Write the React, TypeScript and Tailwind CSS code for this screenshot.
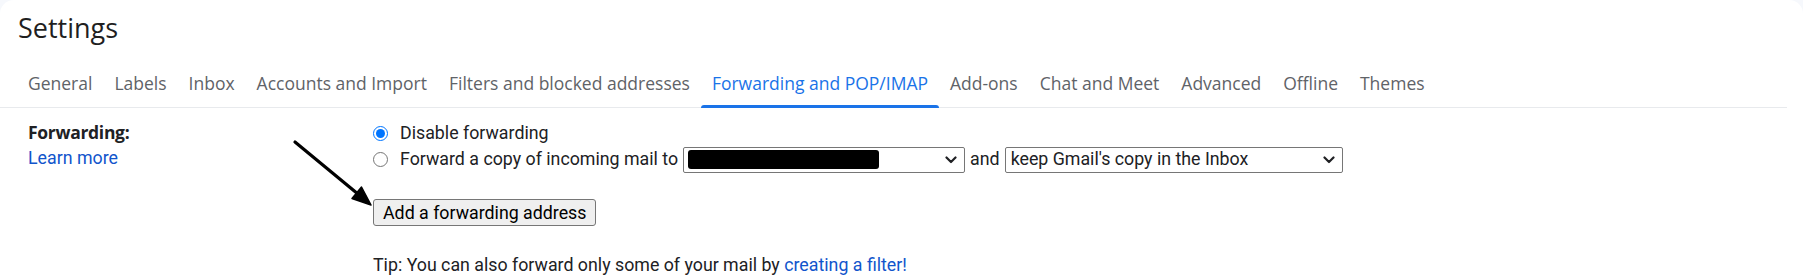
import React from 'react';

const tabs = [
    'General',
    'Labels',
    'Inbox',
    'Accounts and Import',
    'Filters and blocked addresses',
    'Forwarding and POP/IMAP',
    'Add-ons',
    'Chat and Meet',
    'Advanced',
    'Offline',
    'Themes',
];

const Chevron = () => (
    <svg width="12" height="8" viewBox="0 0 12 8" fill="none" stroke="#202124" strokeWidth={2.2} strokeLinecap="round" strokeLinejoin="round">
        <path d="M1.5 1.5L6 6l4.5-4.5" />
    </svg>
);

const Radio = ({ checked }: { checked?: boolean }) => (
    <span
        className={
            checked
                ? 'w-[15px] h-[15px] rounded-full border-[1.5px] border-[#0075ff] flex items-center justify-center shrink-0'
                : 'w-[15px] h-[15px] rounded-full border-[1.5px] border-[#767676] shrink-0'
        }
    >
        {checked && <span className="w-[9px] h-[9px] rounded-full bg-[#0075ff]" />}
    </span>
);

const App: React.FC = () => {
    return (
        <div className="w-[1803px] h-[280px] bg-[#f6f8fc] overflow-hidden">
            <div className="relative h-full bg-white rounded-t-[14px] text-[#202124]">
                {/* Title */}
                <div className="h-[62px] pl-[18px] pt-[10px]">
                    <h1 className="text-[27px] leading-[36px] font-['Open_Sans',sans-serif] text-[#1f1f1f]">Settings</h1>
                </div>

                {/* Tabs */}
                <nav className="flex h-[46px] w-[1787px] pl-[17px] border-b border-[#e8eaed] font-['Open_Sans',sans-serif] text-[17.5px]">
                    {tabs.map(tab => {
                        const active = tab === 'Forwarding and POP/IMAP';
                        return (
                            <div key={tab} className="relative px-[11px] pt-[8px]">
                                <span className={active ? 'leading-[24px] text-[#1a73e8]' : 'leading-[24px] text-[#5f6368]'}>{tab}</span>
                                {active && <span className="absolute left-0 right-0 -bottom-[1px] h-[3px] rounded-t-[3px] bg-[#1a73e8]" />}
                            </div>
                        );
                    })}
                </nav>

                {/* Forwarding section */}
                <div className="flex pt-[12px] font-['Roboto',sans-serif] text-[17.8px]">
                    <div className="w-[373px] pl-[28px] shrink-0">
                        <div className="font-['Open_Sans',sans-serif] text-[17.5px] font-bold tracking-[-0.3px] leading-[25px] text-[#202124]">Forwarding:</div>
                        <a className="block leading-[25px] text-[#1155cc]">Learn more</a>
                    </div>

                    <div className="flex flex-col">
                        <label className="flex items-center h-[26px] gap-[12px]">
                            <Radio checked />
                            <span>Disable forwarding</span>
                        </label>
                        <div className="flex items-center h-[27px]">
                            <label className="flex items-center gap-[12px]">
                                <Radio />
                                <span>Forward a copy of incoming mail to</span>
                            </label>
                            <div className="ml-[5px] w-[282px] h-[26px] border border-[#767676] rounded-[2px] flex items-center justify-between pl-[4px] pr-[7px]">
                                <span className="w-[191px] h-[19px] bg-black rounded-[3px]" />
                                <Chevron />
                            </div>
                            <span className="mx-[5px]">and</span>
                            <div className="w-[338px] h-[26px] border border-[#767676] rounded-[2px] flex items-center justify-between pl-[5px] pr-[7px]">
                                <span>keep Gmail's copy in the Inbox</span>
                                <Chevron />
                            </div>
                        </div>

                        <div className="pt-[26px]">
                            <button className="h-[27px] px-[9px] bg-[#efefef] border border-[#767676] rounded-[3px] leading-[25px] text-[#000]">
                                Add a forwarding address
                            </button>
                        </div>

                        <p className="pt-[25px] leading-[25px]">
                            Tip: You can also forward only some of your mail by{' '}
                            <a className="text-[#1155cc]">creating a filter!</a>
                        </p>
                    </div>
                </div>

                {/* Annotation arrow */}
                <svg className="absolute left-[290px] top-[136px]" width="90" height="75" viewBox="0 0 90 75" fill="none">
                    <line x1="5" y1="6" x2="74" y2="63" stroke="#000" strokeWidth={3.2} strokeLinecap="round" />
                    <path d="M81 69L62 62.5L71.5 51Z" fill="#000" stroke="#000" strokeWidth={1.5} strokeLinejoin="round" />
                </svg>
            </div>
        </div>
    );
};

export default App;
